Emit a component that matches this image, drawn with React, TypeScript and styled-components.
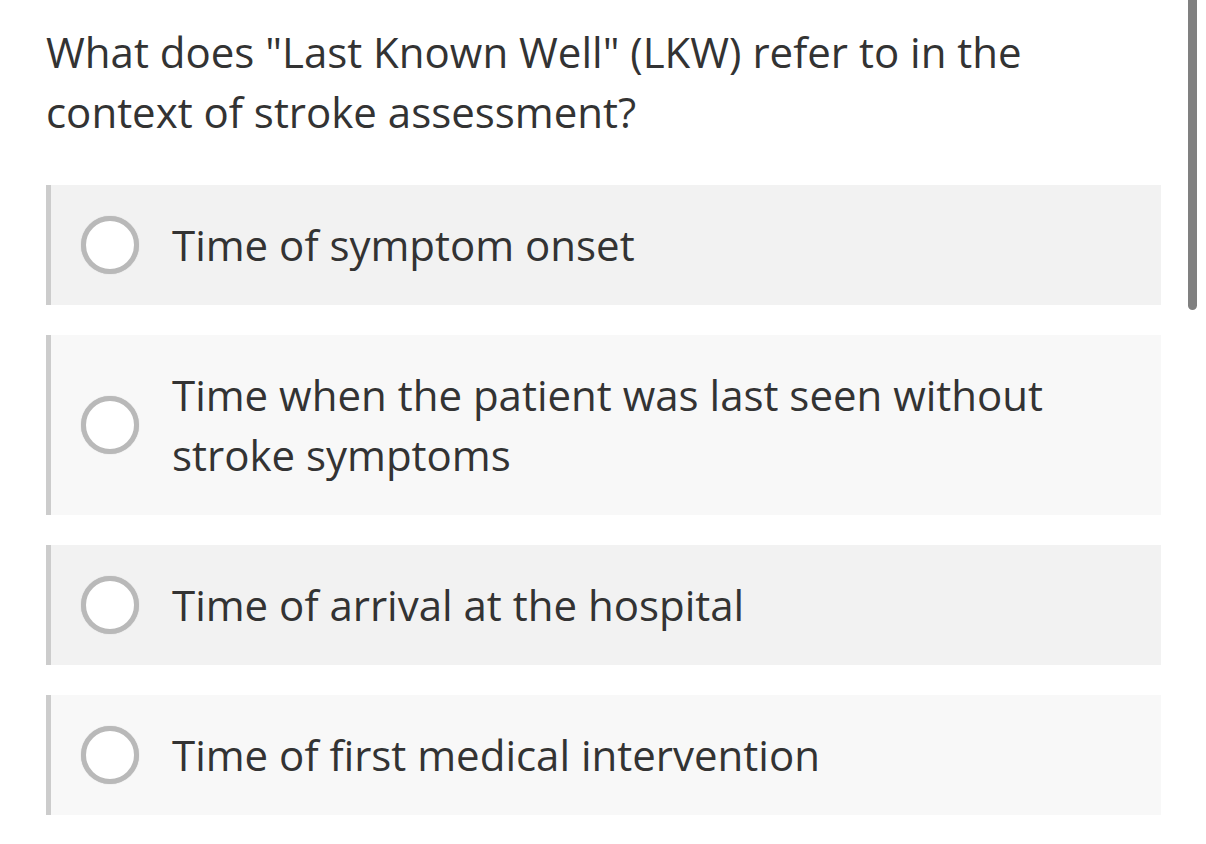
import React from "react";
import styled, { createGlobalStyle } from "styled-components";

const Global = createGlobalStyle`
  html, body { margin: 0; padding: 0; background: #ffffff; }
  body { font-family: "Open Sans", "Noto Sans", sans-serif; }
`;

const Page = styled.div`
  position: relative;
  width: 1206px;
  height: 844px;
  overflow: hidden;
  box-sizing: border-box;
  padding: 22px 45px 0 46px;
`;

const Question = styled.div`
  font-size: 42px;
  line-height: 60px;
  color: #333333;
  margin: 0 0 43px 0;
  max-width: 1040px;
`;

const Options = styled.div`
  display: flex;
  flex-direction: column;
  gap: 30px;
`;

const Option = styled.label<{ $shade: string; $h: number }>`
  display: flex;
  align-items: center;
  height: ${(p) => p.$h}px;
  background: ${(p) => p.$shade};
  border-left: 5px solid #cccccc;
  box-sizing: border-box;
  padding-left: 30px;
`;

const Radio = styled.span`
  flex: none;
  width: 58px;
  height: 58px;
  box-sizing: border-box;
  border-radius: 50%;
  border: 5px solid #b9b9b9;
  background: #ffffff;
  box-shadow: 0 0 1px #b9b9b9;
`;

const OptionText = styled.span<{ $wrap?: boolean }>`
  margin-left: 33px;
  font-size: 42px;
  line-height: 60px;
  color: #333333;
  max-width: ${(p) => (p.$wrap ? "900px" : "none")};
`;

const Scrollbar = styled.div`
  position: absolute;
  top: 0;
  right: 9px;
  width: 9px;
  height: 310px;
  background: #808080;
  border-radius: 0 0 5px 5px;
`;

const options = [
  { text: "Time of symptom onset", shade: "#f2f2f2", h: 120 },
  { text: "Time when the patient was last seen without stroke symptoms", shade: "#f8f8f8", h: 180 },
  { text: "Time of arrival at the hospital", shade: "#f2f2f2", h: 120 },
  { text: "Time of first medical intervention", shade: "#f8f8f8", h: 120 },
];

export default function App() {
  return (
    <>
      <Global />
      <Page>
        <Question>
          What does "Last Known Well" (LKW) refer to in the context of stroke assessment?
        </Question>
        <Options>
          {options.map((o) => (
            <Option key={o.text} $shade={o.shade} $h={o.h}>
              <Radio />
              <OptionText $wrap={o.h > 120}>{o.text}</OptionText>
            </Option>
          ))}
        </Options>
        <Scrollbar />
      </Page>
    </>
  );
}
